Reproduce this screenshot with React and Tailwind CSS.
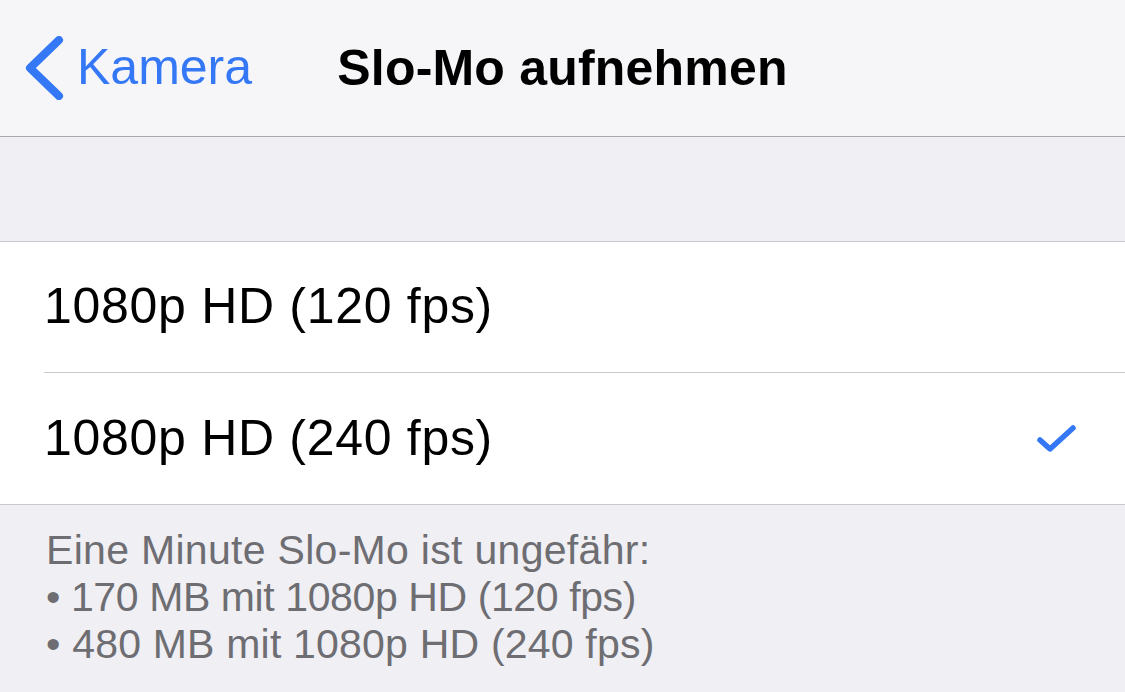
import React from 'react';

const rows = [
  { label: '1080p HD (120 fps)', selected: false },
  { label: '1080p HD (240 fps)', selected: true },
];

function Chevron() {
  return (
    <svg width="40" height="64" viewBox="0 0 40 64" className="shrink-0">
      <path d="M34 4 L5 32 L34 60" fill="none" stroke="#3478f6" strokeWidth="8" strokeLinecap="round" strokeLinejoin="round" />
    </svg>
  );
}

function Check() {
  return (
    <svg width="44" height="34" viewBox="0 0 44 34">
      <path d="M5 18 L15 27 L38 6" fill="none" stroke="#3478f6" strokeWidth="5.5" strokeLinecap="round" strokeLinejoin="round" />
    </svg>
  );
}

export default function App() {
  return (
    <div className="w-[1125px] h-[692px] overflow-hidden bg-[#efeff4] select-none" style={{ fontFamily: '"Liberation Sans", Arial, sans-serif' }}>
      {/* Navigation bar */}
      <header className="h-[137px] bg-[#f6f6f9] border-b border-[#a8a8ad] grid grid-cols-[1fr_auto_1fr] items-center">
        <div className="flex items-center pl-[25px] gap-[12px] text-[#3478f6] text-[50px] leading-none">
          <Chevron />
          <span className="pb-[2px]">Kamera</span>
        </div>
        <h1 className="text-[50px] font-bold text-black leading-none tracking-[0.2px]">Slo-Mo aufnehmen</h1>
        <div />
      </header>

      {/* Group spacer */}
      <div className="h-[105px] border-b border-[#c8c7cc]" />

      {/* Options */}
      <div className="bg-white border-b border-[#c8c7cc]">
        {rows.map((row, i) => (
          <div key={row.label} className="pl-[44px]">
            <div className={`h-[131px] flex items-center justify-between pr-[46px] ${i < rows.length - 1 ? 'border-b border-[#c8c7cc]' : ''}`}>
              <span className="text-[50px] text-black leading-none tracking-[0.7px] pb-[2px]">{row.label}</span>
              {row.selected && <Check />}
            </div>
          </div>
        ))}
      </div>

      {/* Footer note */}
      <div className="px-[46px] pt-[22px] text-[41px] leading-[47px] text-[#6d6d72]">
        <div className="tracking-[0.3px]">Eine Minute Slo-Mo ist ungefähr:</div>
        <div className="tracking-[-0.4px]">• 170 MB mit 1080p HD (120 fps)</div>
        <div className="tracking-[0.2px]">• 480 MB mit 1080p HD (240 fps)</div>
      </div>
    </div>
  );
}
